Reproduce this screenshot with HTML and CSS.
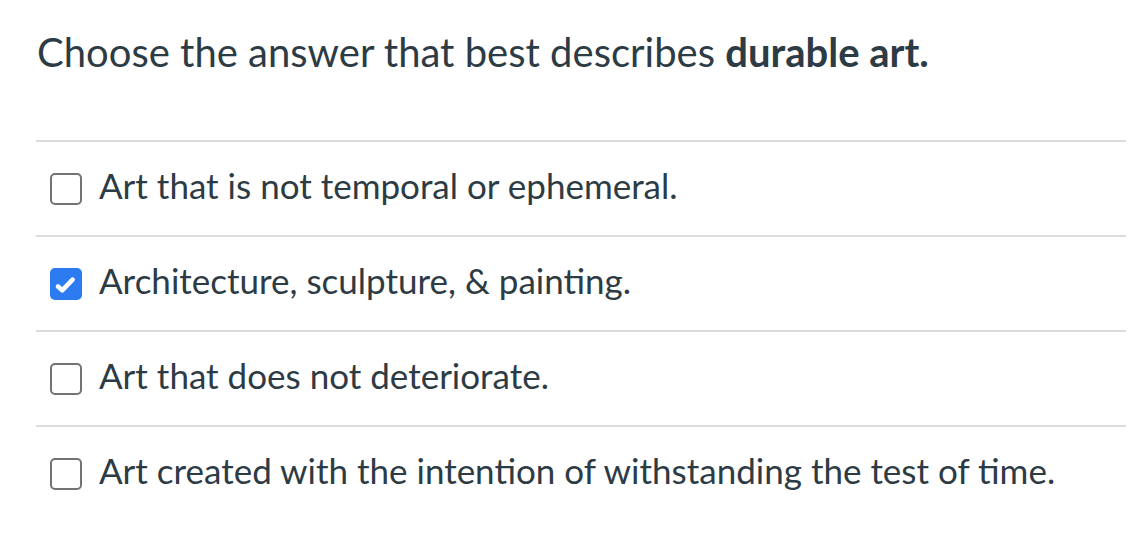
FILE: index.html
```html
<!DOCTYPE html>
<html>
<head>
<meta charset="utf-8">
<link rel="stylesheet" href="styles.css">
</head>
<body>
<div class="quiz">
  <div class="question">Choose the answer that best describes <strong>durable art.</strong></div>
  <div class="answers">
    <label class="answer">
      <span class="box"></span>
      <span class="text">Art that is not temporal or ephemeral.</span>
    </label>
    <label class="answer">
      <span class="box checked"><svg viewBox="0 0 32 32" width="32" height="32"><path d="M8 18.5 L12.2 22.3 L22.6 11.6" fill="none" stroke="#fff" stroke-width="4.6" stroke-linecap="round" stroke-linejoin="round"/></svg></span>
      <span class="text">Architecture, sculpture, &amp; painting.</span>
    </label>
    <label class="answer">
      <span class="box"></span>
      <span class="text">Art that does not deteriorate.</span>
    </label>
    <label class="answer">
      <span class="box"></span>
      <span class="text">Art created with the intention of withstanding the test of time.</span>
    </label>
  </div>
</div>
</body>
</html>
```
FILE: styles.css
```css
html, body {
  margin: 0;
  padding: 0;
  background: #ffffff;
}
body {
  font-family: Lato, "Liberation Sans", sans-serif;
  color: #2d3b45;
}
.quiz {
  width: 1090px;
  padding-left: 36px;
  padding-top: 25px;
}
.question {
  font-size: 40px;
  line-height: 54px;
  padding-left: 1px;
  margin-bottom: 61px;
}
.question strong {
  font-weight: 700;
}
.answers {
  display: flex;
  flex-direction: column;
}
.answer {
  display: flex;
  align-items: center;
  gap: 17px;
  height: 93px;
  padding-left: 14px;
  border-top: 2px solid #dcdcdc;
}
.box {
  width: 32px;
  height: 32px;
  box-sizing: border-box;
  border: 2px solid #737373;
  border-radius: 5px;
  flex: none;
  display: block;
}
.box.checked {
  border: none;
  background: #2d7bf0;
}
.box svg {
  display: block;
}
.text {
  font-size: 35px;
  line-height: 44px;
  padding-bottom: 8px;
}
```
